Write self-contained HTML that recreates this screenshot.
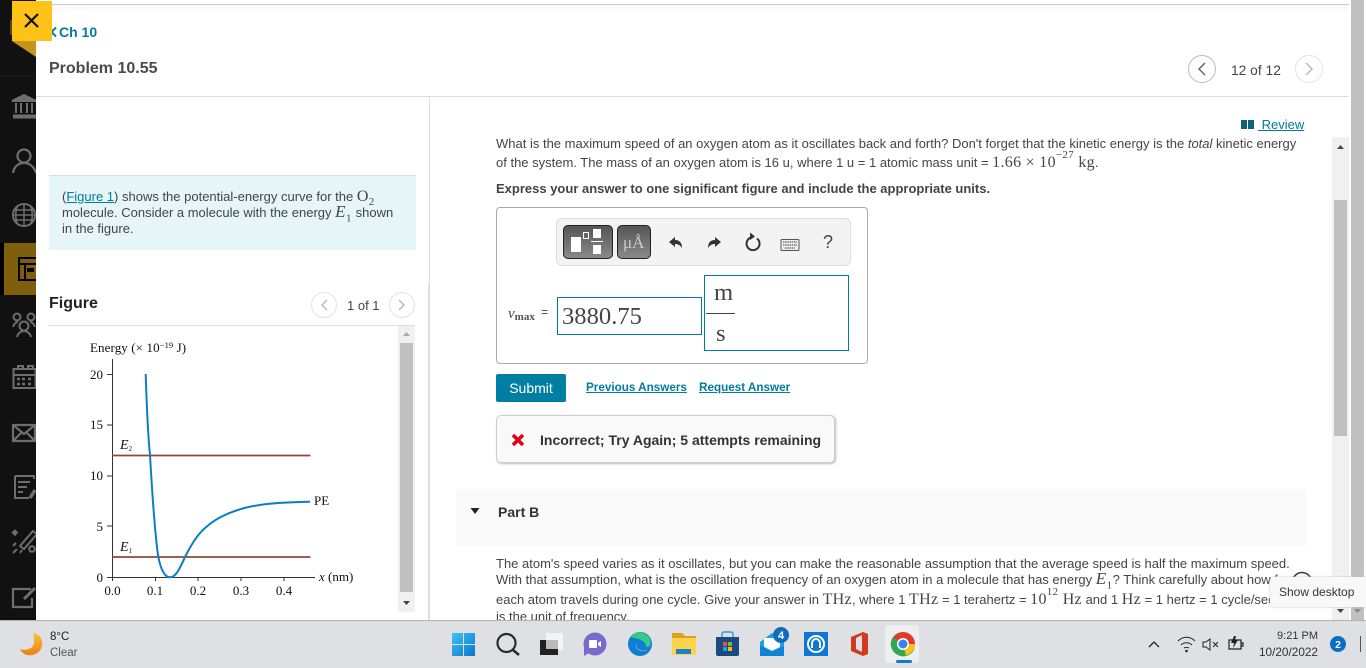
<!DOCTYPE html>
<html><head><meta charset="utf-8"><style>
html,body{margin:0;padding:0;background:#fff;width:1366px;height:668px;overflow:hidden;font-family:"Liberation Sans",sans-serif;color:#444}
.a{position:absolute;white-space:nowrap}
.t{font-size:13px;line-height:16px}
.m{font-family:"Liberation Serif",serif;font-size:16px;letter-spacing:.3px}
.mi{font-family:"Liberation Serif",serif;font-style:italic;font-size:17px;letter-spacing:.5px}
sub,sup{font-size:11px;line-height:0;font-family:"Liberation Serif",serif;font-style:normal}
a{color:#007c9e;text-decoration:underline}
svg{position:absolute;overflow:visible}
</style></head><body>
<div class="a" style="left:36px;top:0;width:1313px;height:4px;background:#fff"></div>
<div class="a" style="left:36px;top:4px;width:1313px;height:1px;background:#ccc"></div>
<div class="a" style="left:36px;top:5px;width:1313px;height:6px;background:#fafafa"></div>
<div class="a" style="left:36px;top:96px;width:1313px;height:1px;background:#ddd"></div>
<div class="a" style="left:429px;top:97px;width:1px;height:523px;background:#e0e0e0"></div>
<div class="a" style="left:428px;top:285px;width:2px;height:335px;background:#d5e0ea"></div>
<!-- outer scrollbar -->
<div class="a" style="left:1351px;top:0;width:13px;height:620px;background:#c0c0c0"></div>
<div class="a" style="left:1332px;top:137px;width:17px;height:483px;background:#f0f0f0"></div>
<div class="a" style="left:1334px;top:200px;width:13px;height:236px;background:#c0c0c0"></div>
<svg style="left:0;top:0" width="1366" height="668"><path d="M1337 149l3.500-4 3.500 4z" fill="#444"/><path d="M1337 609l3.500 4 3.500-4z" fill="#444"/><path d="M1354 609l3.500 4 3.500-4z" fill="#888"/></svg>

<!-- header -->
<svg style="left:50px;top:27px" width="8" height="10"><path d="M6 .5L1.500 5 6 9.500" fill="none" stroke="#007c9e" stroke-width="2"/></svg>
<div class="a" style="left:59px;top:24px;font-size:14px;font-weight:bold;line-height:16px;color:#007c9e">Ch 10</div>
<div class="a" style="left:49px;top:60px;font-size:16px;font-weight:bold;line-height:18px;color:#4a4a4a">Problem 10.55</div>
<svg style="left:1187px;top:54px" width="140" height="30"><circle cx="15" cy="15" r="13.500" fill="#fff" stroke="#bbb"/><path d="M18 9l-6 6 6 6" fill="none" stroke="#5a6b78" stroke-width="1.500"/><circle cx="122" cy="15" r="13.500" fill="#fff" stroke="#e3e3e3"/><path d="M119 9l6 6-6 6" fill="none" stroke="#bbb" stroke-width="1.500"/></svg>
<div class="a" style="left:1231px;top:63px;font-size:13.800px;line-height:16px">12 of 12</div>

<!-- left panel -->
<div class="a" style="left:49px;top:175px;width:367px;height:75px;background:#e6f5f7;border-top:1px solid #ddd;box-sizing:border-box"></div>
<div class="a t" style="left:62px;top:189px">(<a href="#">Figure 1</a>) shows the potential-energy curve for the <span class="m">O<sub>2</sub></span></div>
<div class="a t" style="left:62px;top:204px">molecule. Consider a molecule with the energy <span class="mi">E<sub>1</sub></span> shown</div>
<div class="a t" style="left:62px;top:221px">in the figure.</div>
<div class="a" style="left:49px;top:295px;font-size:16px;font-weight:bold;line-height:18px;color:#222">Figure</div>
<svg style="left:310px;top:292px" width="106" height="28"><circle cx="14" cy="13" r="12.500" fill="#fff" stroke="#e3e3e3"/><path d="M17 8l-5 5 5 5" fill="none" stroke="#bbb" stroke-width="1.500"/><circle cx="92" cy="13" r="12.500" fill="#fff" stroke="#e3e3e3"/><path d="M89 8l5 5-5 5" fill="none" stroke="#bbb" stroke-width="1.500"/></svg>
<div class="a" style="left:347px;top:298px;font-size:13px;line-height:16px">1 of 1</div>
<div class="a" style="left:49px;top:325px;width:366px;height:1px;background:#ddd"></div>
<div class="a" style="left:398px;top:326px;width:17px;height:286px;background:#f0f0f0"></div>
<div class="a" style="left:400px;top:343px;width:13px;height:249px;background:#c0c0c0"></div>
<svg style="left:0;top:0" width="430" height="620"><path d="M403 336l3.500-4 3.500 4z" fill="#aaa"/><path d="M403 601l3.500 4 3.500-4z" fill="#444"/></svg>

<!-- figure -->
<svg style="left:0;top:0" width="430" height="620" font-family="Liberation Serif, serif" font-size="13" fill="#111">
<path d="M112.500 359V577.500H315M107 374.500h5M107 425h5M107 476h5M107 526h5M107 577.500h5M112.500 577v4M155.500 577v4M198 577v4M241 577v4M284 577v4" fill="none" stroke="#333" stroke-width="1"/>
<path d="M112 455.500H310.500M112 557H310.500" stroke="#8c4a32" stroke-width="1.700" fill="none"/>
<path d="M145.700 374C146.500 400 148 435 150 455C152 490 155 535 158.300 557C161 570 165 577.300 170 577.300C176 577.300 180 568 185 557C191 545 198 533 206.700 526.700C215 519 224 515 233 511.700C245 507 256 505.500 267 504C280 502.500 295 502 310 501.700" fill="none" stroke="#0a7fc4" stroke-width="2"/>
<text x="90" y="352" letter-spacing=".1">Energy (× 10<tspan font-size="8.500" dy="-4">−19</tspan><tspan dy="4"> J)</tspan></text>
<g text-anchor="end"><text x="103" y="379">20</text><text x="103" y="429">15</text><text x="103" y="480">10</text><text x="103" y="531">5</text><text x="103" y="582">0</text></g>
<g text-anchor="middle"><text x="112.500" y="595">0.0</text><text x="155" y="595">0.1</text><text x="198" y="595">0.2</text><text x="241" y="595">0.3</text><text x="284" y="595">0.4</text></g>
<text x="120" y="449" font-style="italic" font-size="14">E<tspan font-size="7" dy="2" font-style="normal">2</tspan></text>
<text x="120" y="551" font-style="italic" font-size="14">E<tspan font-size="7" dy="2" font-style="normal">1</tspan></text>
<text x="314" y="505">PE</text>
<text x="319" y="581"><tspan font-style="italic">x</tspan> (nm)</text>
</svg>

<!-- right panel -->
<svg style="left:1240px;top:119px" width="16" height="10"><path d="M1 1h6v9H1zM8 1h6v9H8z" fill="#0b6478"/></svg>
<div class="a" style="left:1258px;top:117px;font-size:13px;line-height:16px"><a href="#" style="color:#007c9e">&nbsp;Review</a></div>
<div class="a t" style="left:496px;top:136px">What is the maximum speed of an oxygen atom as it oscillates back and forth? Don't forget that the kinetic energy is the <i>total</i> kinetic energy</div>
<div class="a t" style="left:496px;top:155px">of the system. The mass of an oxygen atom is 16 u, where 1 u = 1 atomic mass unit = <span class="m">1.66 × 10<sup style="position:relative;top:-3px">−27</sup> kg</span>.</div>
<div class="a" style="left:496px;top:181px;font-size:13px;line-height:16px;font-weight:bold">Express your answer to one significant figure and include the appropriate units.</div>

<div class="a" style="left:496px;top:207px;width:372px;height:157px;box-sizing:border-box;border:1px solid #aaa;border-radius:4px"></div>
<div class="a" style="left:556px;top:218px;width:295px;height:48px;box-sizing:border-box;background:#f3f3f3;border:1px solid #ddd;border-radius:6px"></div>
<div class="a" style="left:563px;top:225px;width:50px;height:34px;box-sizing:border-box;background:linear-gradient(#555,#8a8a8a);border:1px solid #222;border-radius:5px"></div>
<div class="a" style="left:617px;top:225px;width:34px;height:34px;box-sizing:border-box;background:linear-gradient(#555,#8a8a8a);border:1px solid #222;border-radius:5px"></div>
<div class="a" style="left:623px;top:231px;font:17px/24px 'Liberation Serif',serif;color:#ccc">μÅ</div>
<svg style="left:0;top:0" width="900" height="300">
<path d="M571 237h10v15h-10z" fill="#fff"/><path d="M583.500 232.500h5v6h-5z" fill="none" stroke="#fff"/>
<path d="M593 229h8v9h-8zM593 245h8v9h-8z" fill="#fff"/><path d="M591 241.500h12" stroke="#fff"/>
<path d="M669 242l6-5v3c4 0 7 2 7 8-2-3-4-4-7-4v3z" fill="#333"/>
<path d="M721 242l-6-5v3c-4 0-7 2-7 8 2-3 4-4 7-4v3z" fill="#333"/>
<path d="M757 238.500a6.500 6.500 0 1 1-6-1" fill="none" stroke="#333" stroke-width="2"/><path d="M750 232.500l5 4-5 3.500z" fill="#333"/>
<rect x="781" y="239.500" width="18" height="11" rx="1" fill="#eee" stroke="#555"/><path d="M783 242h14M783 245h14M785 248h10" stroke="#777" stroke-width="1.500" stroke-dasharray="1.500 .7"/>
</svg>
<div class="a" style="left:823px;top:232px;font-size:18px;line-height:20px;color:#444">?</div>

<div class="a" style="left:508px;top:304px;font:italic 15px/20px 'Liberation Serif',serif;color:#444">v<span style="font-style:normal;font-size:11px;position:relative;top:2px;font-weight:bold;color:#555">max</span></div>
<div class="a" style="left:541px;top:304px;font-size:12px;line-height:16px">=</div>
<div class="a" style="left:557px;top:297px;width:145px;height:38px;box-sizing:border-box;border:1px solid #007c9e"></div>
<div class="a" style="left:562px;top:302px;font:24.600px/30px 'Liberation Serif',serif;color:#444">3880.75</div>
<div class="a" style="left:704px;top:275px;width:145px;height:76px;box-sizing:border-box;border:1px solid #007c9e"></div>
<div class="a" style="left:714px;top:278px;font:24.600px/30px 'Liberation Serif',serif;color:#444">m</div>
<div class="a" style="left:706px;top:313px;width:29px;height:1px;background:#444"></div>
<div class="a" style="left:716px;top:319px;font:24.600px/30px 'Liberation Serif',serif;color:#444">s</div>

<div class="a" style="left:496px;top:374px;width:70px;height:28px;background:#007fa3;border-radius:2px;color:#fff;font-size:14px;line-height:28px;text-align:center">Submit</div>
<div class="a" style="left:586px;top:380px;font-size:11.700px;line-height:16px;font-weight:bold"><a href="#">Previous Answers</a></div>
<div class="a" style="left:699px;top:380px;font-size:11.700px;line-height:16px;font-weight:bold"><a href="#">Request Answer</a></div>

<div class="a" style="left:496px;top:415px;width:339px;height:48px;box-sizing:border-box;background:#f9f9f9;border:1px solid #ccc;border-radius:5px;box-shadow:1px 1px 2px #bbb"></div>
<svg style="left:511px;top:433px" width="15" height="15"><path d="M2 2l10 10M12 2L2 12" stroke="#e2001a" stroke-width="3.500"/></svg>
<div class="a" style="left:540px;top:432px;font-size:14px;line-height:16px;font-weight:bold;color:#333">Incorrect; Try Again; 5 attempts remaining</div>

<div class="a" style="left:456px;top:489px;width:850px;height:57px;background:#f9f9f9"></div>
<svg style="left:470px;top:507px" width="12" height="8"><path d="M.5 1h9l-4.500 6z" fill="#222"/></svg>
<div class="a" style="left:498px;top:504px;font-size:14px;line-height:16px;font-weight:bold;color:#333">Part B</div>

<div class="a t" style="left:496px;top:556px">The atom's speed varies as it oscillates, but you can make the reasonable assumption that the average speed is half the maximum speed.</div>
<div class="a t" style="left:496px;top:571px">With that assumption, what is the oscillation frequency of an oxygen atom in a molecule that has energy <span class="mi">E<sub>1</sub></span>? Think carefully about how far</div>
<div class="a t" style="left:496px;top:592px">each atom travels during one cycle. Give your answer in <span class="m">THz</span>, where 1 <span class="m">THz</span> = 1 terahertz = <span class="m">10<sup style="position:relative;top:-3px">12</sup> Hz</span> and 1 <span class="m">Hz</span> = 1 hertz = 1 cycle/second.</div>
<div class="a t" style="left:496px;top:609px">is the unit of frequency.</div>
<svg style="left:1290px;top:569px" width="24" height="24"><circle cx="12" cy="13" r="9.500" fill="#fff" stroke="#333" stroke-width="1.500"/></svg>
<div class="a" style="left:1270px;top:577px;width:96px;height:30px;background:#f8f8f8;border-radius:4px 0 0 4px;box-shadow:0 0 2px #bbb;font-size:12px;line-height:30px;color:#333;text-indent:9px">Show desktop</div>

<!-- sidebar -->
<div class="a" style="left:0;top:0;width:36px;height:620px;background:#111;overflow:hidden">
<div class="a" style="left:10px;top:20px;width:2px;height:15px;background:#5a4610"></div>
<div class="a" style="left:0;top:76px;width:36px;height:1px;background:#1c1c1c"></div>
<div class="a" style="left:0;top:243px;width:4px;height:52px;background:#000"></div>
<div class="a" style="left:4px;top:243px;width:32px;height:52px;background:#7f5f0d"></div>
<svg style="left:0;top:0" width="36" height="620" fill="none" stroke="#6e6e6e" stroke-width="2">
<path d="M12 101l12-6 12 6z" fill="#6e6e6e"/><path d="M16 103v10M21 103v10M27 103v10M32 103v10" stroke-width="2"/><path d="M13 116.500h23" stroke-width="4"/>
<circle cx="24" cy="156" r="6.500" stroke-width="2.200"/><path d="M13 173c1-7 6-10 11-10s10 3 12 10" stroke-width="2.200"/>
<circle cx="24" cy="215" r="11"/><path d="M13 215h22M13 210h22M13 220h22M24 204v22M18 205c-3 6-3 14 0 20M30 205c3 6 3 14 0 20" stroke-width="1.500"/>
<path d="M19 258h22v22H19zM19 264h22M25 264v16" stroke="#000" stroke-width="2"/><path d="M27 268h7v4h-7z" fill="#000" stroke="none"/>
<circle cx="17" cy="317" r="3.500"/><circle cx="31" cy="317" r="3.500"/><circle cx="24" cy="326" r="4.500"/><path d="M13 327c1-3 3-5 5-5M35 327c-1-3-3-5-5-5M17 337c1-4 4-6 7-6s6 2 7 6"/>
<path d="M13.500 369h22v19h-22zM13.500 375h22M18 366h5v3h-5zM28 366h5v3h-5z"/><path d="M17 379h3M22 379h3M28 379h3M17 384h3M22 384h3M28 384h3" stroke-width="2.500"/>
<path d="M13 425h22v16H13zM13 425l11 9 11-9M13 441l8-8M35 441l-8-8" stroke-width="2.200"/>
<path d="M15 476h19v3M15 476v22h14M18 482h12M18 487h9M18 492h5" stroke-width="2"/><path d="M30 498l5-8" stroke-width="3.500"/>
<path d="M15 530l2.500 2.500-2.500 3-3-3z" fill="#6e6e6e" stroke-width="1"/><path d="M20 546l13-15 4 3-13 15zM13 546l3-3M13 553l4-4M20 553l2-3" stroke-width="2"/><circle cx="32" cy="549" r="2.800"/>
<path d="M31 589H13v18h19v-9" stroke-width="2.200"/><path d="M24 599l11-11" stroke-width="3"/>
</svg>
</div>
<svg style="left:0;top:0" width="60" height="60"><path d="M12 41h24v16z" fill="#c4951a"/></svg>
<div class="a" style="left:12px;top:1px;width:40px;height:40px;background:#ffc216"></div>
<svg style="left:24px;top:13px" width="16" height="16"><path d="M1 1l13 13M14 1L1 14" stroke="#111" stroke-width="2.200"/></svg>

<!-- taskbar -->
<div class="a" style="left:0;top:620px;width:1366px;height:48px;background:#dfe0e4;border-top:1px solid #b4b4b4;box-sizing:border-box"></div>
<svg style="left:19px;top:632px" width="26" height="26"><defs><linearGradient id="mn" x1="0" y1="0" x2="0" y2="1"><stop offset="0" stop-color="#f6c43a"/><stop offset="1" stop-color="#ee7d14"/></linearGradient></defs><path d="M14 1c8 1 10 8 9 13-2 8-10 10-15 9-3-1-6-3-7-6 6 2 14 0 14-7 0-4 0-6-1-9z" fill="url(#mn)"/></svg>
<div class="a" style="left:50px;top:629px;font-size:11.500px;line-height:16px;color:#222">8°C</div>
<div class="a" style="left:50px;top:645px;font-size:11.500px;line-height:16px;color:#555">Clear</div>

<div class="a" style="left:885px;top:625px;width:34px;height:38px;background:#eeeef0;border-radius:4px"></div>
<svg style="left:0;top:620px" width="1366" height="48">
<defs><linearGradient id="wn" x1="0" y1="0" x2="1" y2="1" gradientUnits="objectBoundingBox"><stop offset="0" stop-color="#3cc4f4"/><stop offset="1" stop-color="#0b74d0"/></linearGradient></defs>
<path d="M452 13h11v11h-11zM464 13h11v11h-11zM452 25h11v11h-11zM464 25h11v11h-11z" fill="url(#wn)"/>
<circle cx="506.500" cy="23" r="9" fill="none" stroke="#2a2a2a" stroke-width="2.200"/><path d="M513 30l6 5" stroke="#2a2a2a" stroke-width="2.500"/>
<path d="M546 13h17v17h-17z" fill="#f4f4f4"/><path d="M540 20h18v15h-18z" fill="#222"/><path d="M546 20h12v9h-12z" fill="#bbb"/>
<circle cx="595" cy="24" r="11.500" fill="#7a6ad0"/><path d="M584 24v12l5-3z" fill="#7a6ad0"/><rect x="589" y="20" width="8" height="8" rx="1" fill="#fff"/><path d="M598 23l3-2v6l-3-2z" fill="#fff"/>
<circle cx="640" cy="24" r="12" fill="#0f7ed0"/><path d="M630 17c5-7 16-6 20 2 1 3 1 7-2 8-3 0-2-3-4-5-3-3-9-4-14-5z" fill="#36c98b"/><path d="M636 24c0 6 5 8 11 6" fill="none" stroke="#fff" stroke-width="1" opacity=".3"/>
<path d="M672 13h10l3 3h11v4h-24z" fill="#d9a21c"/><path d="M672 18h24v17h-24z" fill="#fdd349"/><path d="M676 29h15v5h-15z" fill="#1d7fc4"/>
<path d="M716 17h23v17a2 2 0 0 1-2 2h-19a2 2 0 0 1-2-2z" fill="#1b4a80"/><path d="M722 17v-3a2 2 0 0 1 2-2h7a2 2 0 0 1 2 2v3" fill="none" stroke="#26a0da" stroke-width="1.500"/><path d="M723 22h4v4h-4z" fill="#e8533f"/><path d="M728 22h4v4h-4z" fill="#7cb83a"/><path d="M723 27h4v4h-4z" fill="#26a0da"/><path d="M728 27h4v4h-4z" fill="#fbbc09"/>
<path d="M760 22l12-9 12 9v14h-24z" fill="#1a9fe8"/><path d="M764 18h16v9l-8 4-8-4z" fill="#fff"/><path d="M760 25l12 6 12-5v10h-24z" fill="#0f84d4"/><circle cx="781" cy="15" r="8" fill="#0f6cbd"/>
<text x="781" y="19" font-family="Liberation Sans, sans-serif" font-size="11" font-weight="bold" fill="#fff" text-anchor="middle">4</text>
<path d="M804 12h24v24h-24z" fill="#0a78d4"/><circle cx="816" cy="24" r="8" fill="none" stroke="#fff" stroke-width="2"/><path d="M812 28v-5a4 4 0 0 1 8 0v5" fill="none" stroke="#fff" stroke-width="2"/>
<path d="M851 17l12-5 5 2v20l-5 2-12-5zM856 18v11l6 3V15z" fill="#d13a1e" fill-rule="evenodd"/>
<circle cx="903" cy="24" r="12" fill="#e3392d"/><path d="M903 24L893 17a12 12 0 0 0 4 17.500z" fill="#30a853"/><path d="M903 24l-6 10.500a12 12 0 0 0 17-4.500l1-6z" fill="#30a853"/><path d="M903 24h12a12 12 0 0 1-9 11.500z" fill="#fbc116"/><circle cx="903" cy="24" r="6" fill="#fff"/><circle cx="903" cy="24" r="4.500" fill="#3b82ee"/>
<rect x="896" y="40" width="16" height="3" rx="1.500" fill="#0f7bd0"/>
<path d="M1149 27l5-5 5 5" fill="none" stroke="#222" stroke-width="1.300"/>
<path d="M1178 21c5-5 12-5 17 0M1181 25c3-3 8-3 11 0M1184 28c2-1 3-1 5 0" fill="none" stroke="#222"/><circle cx="1186.500" cy="31" r="1.300" fill="#222"/>
<path d="M1203 22h3l4-3v11l-4-3h-3zM1213 22l5 5M1218 22l-5 5" fill="none" stroke="#222"/>
<path d="M1229 20h12v9h-12zM1241 23h2v3h-2" fill="none" stroke="#222" stroke-width="1.200"/><path d="M1234 16l-3 7h3l-1 5 5-8h-3l1-4z" fill="#222"/>
<circle cx="1338" cy="24" r="8" fill="#0a6fc4"/><text x="1338" y="28" font-family="Liberation Sans, sans-serif" font-size="10.500" font-weight="bold" fill="#fff" text-anchor="middle">2</text>
<path d="M1360.500 16v16" stroke="#555"/>
</svg>
<div class="a" style="right:48px;top:628px;font-size:11px;line-height:16px;color:#333;text-align:right">9:21 PM</div>
<div class="a" style="right:48px;top:644px;font-size:11.800px;line-height:16px;color:#333;text-align:right">10/20/2022</div>
</body></html>
